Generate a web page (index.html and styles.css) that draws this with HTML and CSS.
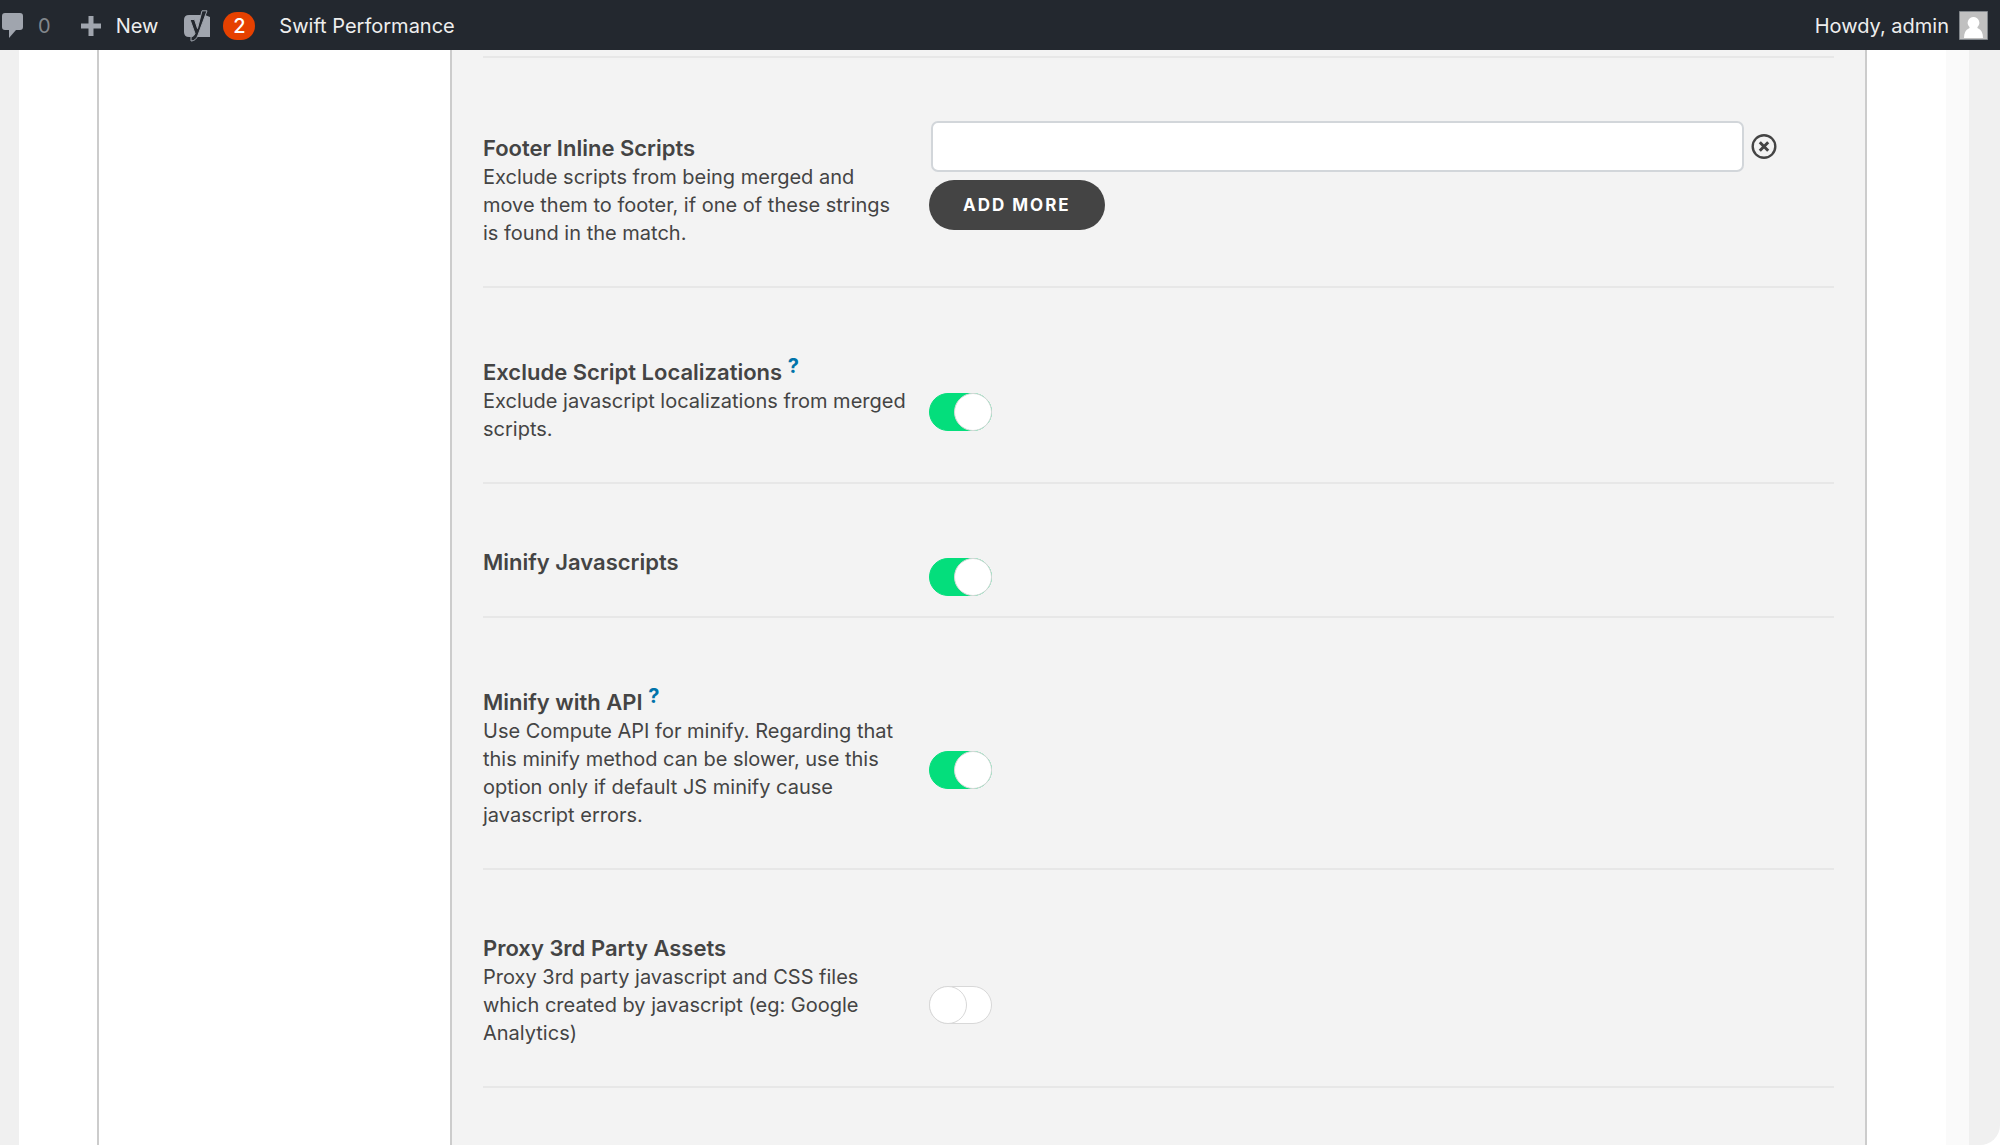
FILE: index.html
```html
<!DOCTYPE html>
<html lang="en">
<head>
  <meta charset="UTF-8">
  <meta name="viewport" content="width=device-width, initial-scale=1.0">
  <title>Swift Performance</title>
  <link rel="stylesheet" href="styles.css">
</head>
<body>
  <header class="adminbar">
    <nav class="adminbar-menu">
      <a href="#" class="comments">
        <svg width="21" height="26" viewBox="0 0 21 26" aria-hidden="true"><path d="M3 0h15q3 0 3 3v11q0 3-3 3h-4l-7 8v-8H3q-3 0-3-3V3q0-3 3-3z"/></svg>
        <span>0</span>
      </a>
      <a href="#" class="new">
        <svg width="20" height="20" viewBox="0 0 20 20" aria-hidden="true"><path d="M7.500 0h5v7.500H20v5h-7.500V20h-5v-7.500H0v-5h7.500z"/></svg>
        <span>New</span>
      </a>
      <a href="#" class="yoast">
        <svg width="27" height="32" viewBox="0 0 27 32" aria-hidden="true">
          <path d="M5 5h16l5 2v20H5q-5 0-5-5V10q0-5 5-5z"/>
          <path class="yoast-y" d="M18 .8h5L14 25q-2 6-7 6v-4q3-.5 4-3.500L6 9.500h4.500l3 9z"/>
        </svg>
        <span class="badge">2</span>
      </a>
      <a href="#">Swift Performance</a>
    </nav>
    <a href="#" class="account">
      <span>Howdy, admin</span>
      <svg width="29" height="29" viewBox="0 0 29 29" aria-hidden="true">
        <path class="avatar-bg" d="M.5.5h28v28H.5z"/>
        <path class="avatar-man" d="M14.500 6a5.800 5.800 0 0 1 4.200 9.800c-.6.700-.3 1.400.5 1.800 3 1.300 4.800 4.400 4.800 9.400H5c0-5 1.800-8.100 4.800-9.400.8-.4 1.100-1.100.5-1.800A5.800 5.800 0 0 1 14.500 6z"/>
      </svg>
    </a>
  </header>

  <main class="page">
    <div class="wrap">
      <div class="panel">
        <aside class="sidebar"></aside>
        <form class="settings">
          <div class="fields">
            <div class="field field-multi">
              <div class="field-label">
                <label class="field-title" for="footer-scripts">Footer Inline Scripts</label>
                <p>Exclude scripts from being merged and move them to footer, if one of these strings is found in the match.</p>
              </div>
              <div class="field-control">
                <div class="text-row">
                  <input type="text" id="footer-scripts" class="text-input">
                  <button type="button" class="remove" aria-label="Remove">
                    <svg width="26" height="26" viewBox="0 0 26 26" aria-hidden="true">
                      <circle cx="13" cy="12.500" r="11.300"/>
                      <path d="M8.800 8.300l8.400 8.400M17.200 8.300l-8.400 8.400"/>
                    </svg>
                  </button>
                </div>
                <button type="button" class="add-more">ADD MORE</button>
              </div>
            </div>

            <div class="field">
              <div class="field-label field-help">
                <label class="field-title" for="exclude-localizations">Exclude Script Localizations</label> <a href="#" class="help">?</a>
                <p>Exclude javascript localizations from merged scripts.</p>
              </div>
              <div class="field-control">
                <input type="checkbox" id="exclude-localizations" class="toggle" checked>
              </div>
            </div>

            <div class="field">
              <div class="field-label">
                <label class="field-title" for="minify-js">Minify Javascripts</label>
              </div>
              <div class="field-control">
                <input type="checkbox" id="minify-js" class="toggle" checked>
              </div>
            </div>

            <div class="field">
              <div class="field-label field-help">
                <label class="field-title" for="minify-api">Minify with API</label> <a href="#" class="help">?</a>
                <p>Use Compute API for minify. Regarding that this minify method can be slower, use this option only if default JS minify cause javascript errors.</p>
              </div>
              <div class="field-control">
                <input type="checkbox" id="minify-api" class="toggle" checked>
              </div>
            </div>

            <div class="field">
              <div class="field-label">
                <label class="field-title" for="proxy-assets">Proxy 3rd Party Assets</label>
                <p>Proxy 3rd party javascript and CSS files which created by javascript (eg: Google Analytics)</p>
              </div>
              <div class="field-control">
                <input type="checkbox" id="proxy-assets" class="toggle">
              </div>
            </div>
          </div>
        </form>
      </div>
    </div>
  </main>
</body>
</html>
```
FILE: styles.css
```css
*,
*::before {
  box-sizing: border-box;
}
html {
  background: #fff;
}
body {
  display: flex;
  flex-direction: column;
  min-height: 100vh;
  margin: 0;
  font-family: Inter, 'Liberation Sans', sans-serif;
  font-size: 20px;
  line-height: 28px;
  color: #444;
}
a {
  color: inherit;
  text-decoration: none;
}
p {
  margin: 0;
}

/* Admin bar */
.adminbar {
  display: flex;
  justify-content: space-between;
  align-items: center;
  height: 50px;
  padding: 1px 12px 0 2px;
  background: #23282f;
  color: #eee;
}
.adminbar-menu,
.adminbar a {
  display: flex;
  align-items: center;
}
.adminbar-menu {
  gap: 24px;
}
.adminbar svg {
  flex: none;
  fill: #a0a5ae;
}
.adminbar .comments {
  gap: 15px;
  margin-right: 6px;
  color: #82878c;
}
.adminbar .new {
  gap: 15px;
  margin-right: 2px;
}
.adminbar .yoast {
  gap: 12px;
}
.adminbar .yoast-y {
  fill: #23282f;
  stroke: #a0a5ae;
  stroke-width: 1;
}
.badge {
  width: 32px;
  height: 28px;
  border-radius: 14px;
  background: #e64100;
  color: #fff;
  font-weight: 500;
  text-align: center;
}
.adminbar .account {
  gap: 10px;
}
.adminbar .avatar-bg {
  fill: #c0c0c0;
  stroke: #82878c;
}
.adminbar .avatar-man {
  fill: #fff;
}

/* Page frame */
.page {
  flex: 1;
  display: flex;
  padding: 0 31px 0 19px;
  background: #f0f0f0;
  border-bottom-right-radius: 20px;
}
.wrap {
  flex: 1;
  display: flex;
  padding: 0 79px 0 78px;
  background: #fff;
  border-right: 23px solid #fafafa;
}
.panel {
  flex: 1;
  display: flex;
  border: solid #ccc;
  border-width: 0 2px;
}
.sidebar {
  flex: none;
  width: 353px;
  border-right: 2px solid #ccc;
}
.settings {
  flex: 1;
  padding: 6px 31px;
  background: #f3f3f3;
}

/* Fields */
.fields {
  border-top: 2px solid #e7e7e7;
}
.field {
  display: grid;
  grid-template-columns: 446px 1fr;
  border-bottom: 2px solid #e7e7e7;
}
.field-label {
  padding: 63px 18px 39px 0;
}
.field-help {
  padding-top: 69px;
}
.field-title {
  display: inline-block;
  font-size: 22px;
  font-weight: 600;
  line-height: 30px;
}
.help {
  display: inline-block;
  height: 30px;
  line-height: 18px;
  vertical-align: top;
  font-weight: 700;
  color: #0073aa;
}
.field-control {
  align-self: center;
  padding-top: 53px;
}
.field-multi .field-label {
  padding-top: 75px;
}
.field-multi .field-control {
  align-self: start;
  padding-top: 63px;
}
.text-row {
  display: flex;
  align-items: center;
  gap: 7px;
  margin-bottom: 8px;
  padding-left: 2px;
}
.text-input {
  width: 90%;
  height: 51px;
  padding: 0 12px;
  border: 2px solid #d2d6da;
  border-radius: 7px;
  background: #fff;
  font: inherit;
  color: inherit;
}
.remove {
  display: flex;
  padding: 0;
  border: 0;
  background: none;
}
.remove svg {
  fill: none;
  stroke: #444;
  stroke-width: 2.4;
}
.remove path {
  stroke-width: 3;
}
.add-more {
  display: block;
  height: 50px;
  padding: 0 34px;
  border: 0;
  border-radius: 25px;
  background: #444;
  color: #fff;
  font: 700 17px Inter, 'Liberation Sans', sans-serif;
  letter-spacing: 2px;
}
.toggle {
  appearance: none;
  display: block;
  width: 63px;
  height: 38px;
  margin: 0;
  border: 1px solid #d8d8d8;
  border-radius: 19px;
  background: #fff;
}
.toggle::before {
  content: '';
  display: block;
  width: 38px;
  height: 38px;
  margin: -1px;
  border: 1px solid #d8d8d8;
  border-radius: 50%;
  background: #fff;
}
.toggle:checked {
  border-color: #04de7c;
  background: #04de7c;
}
.toggle:checked::before {
  margin-left: 24px;
}
```
